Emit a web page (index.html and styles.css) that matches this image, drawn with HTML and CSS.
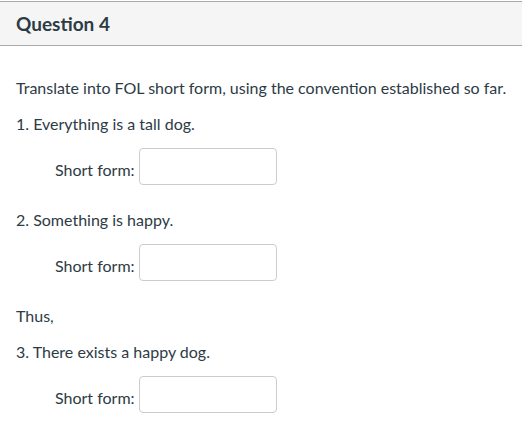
FILE: index.html
```html
<!DOCTYPE html>
<html>
<head>
<meta charset="utf-8">
<link rel="stylesheet" href="styles.css">
</head>
<body>
<div class="question">
  <div class="header">
    <span class="title">Question 4</span>
  </div>
  <div class="content">
    <p>Translate into FOL short form, using the convention established so far.</p>
    <p>1. Everything is a tall dog.</p>
    <div class="answer">
      <label class="label">Short form:</label>
      <input class="field" type="text">
    </div>
    <p>2. Something is happy.</p>
    <div class="answer">
      <label class="label">Short form:</label>
      <input class="field" type="text">
    </div>
    <p>Thus,</p>
    <p>3. There exists a happy dog.</p>
    <div class="answer last">
      <label class="label">Short form:</label>
      <input class="field" type="text">
    </div>
  </div>
</div>
</body>
</html>
```
FILE: styles.css
```css
html, body {
  margin: 0;
  padding: 0;
  background: #ffffff;
  overflow: hidden;
}
body {
  font-family: Lato, "Open Sans", sans-serif;
  font-size: 16px;
  line-height: 24px;
  color: #2d3b45;
}
.question {
  padding-top: 1px;
}
.header {
  background: #f5f5f5;
  border-top: 1px solid #aaaaaa;
  border-bottom: 1px solid #aaaaaa;
  height: 43px;
  display: flex;
  align-items: center;
  padding-left: 16px;
}
.title {
  font-weight: bold;
  font-size: 19px;
  line-height: 24px;
}
.content {
  padding: 30px 16px 0 16px;
}
.content p {
  margin: 0 0 12px 0;
  white-space: nowrap;
}
.answer {
  display: flex;
  align-items: center;
  padding-left: 39px;
  margin-bottom: 23px;
}
.answer.last {
  margin-bottom: 0;
}
.label {
  width: 84px;
  flex: none;
  padding-top: 6px;
  text-align: left;
  white-space: nowrap;
}
.field {
  box-sizing: border-box;
  width: 138px;
  height: 37px;
  border: 1px solid #cccccc;
  border-radius: 4px;
  margin: 0;
  padding: 0 6px;
  font-family: inherit;
  font-size: 16px;
  background: #ffffff;
}
```
